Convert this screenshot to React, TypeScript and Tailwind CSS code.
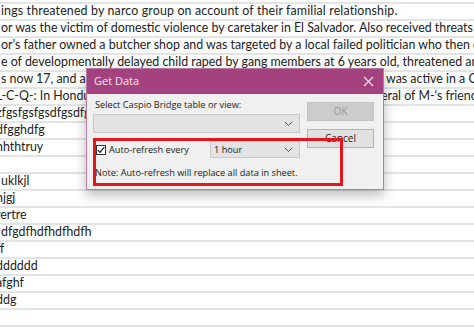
import React from "react";

type Row = { left: string; right?: string; cls: string };

const rows: Row[] = [
  { left: "", cls: "ml-[1px]" },
  { left: "ings threatened by narco group on account of their familial relationship.", cls: "ml-[1px] tracking-[0.15px]" },
  { left: "or was the victim of domestic violence by caretaker in El Salvador. Also received threats in", cls: "ml-[1px]" },
  { left: "or\u2019s father owned a butcher shop and was targeted by a local failed politician who then ca", cls: "ml-[1px]" },
  { left: "e of developmentally delayed child raped by gang members at 6 years old, threatened and", cls: "ml-[1px]" },
  { left: "s now 17, and a c", right: "was active in a Ch", cls: "ml-[1px]" },
  { left: "L-C-Q-: In Hondu", right: "eral of M-\u2018s frienc", cls: "-ml-[4px]" },
  { left: "zfgsfgsfgsdfgsdfg", cls: "-ml-[4px]" },
  { left: "dfgghdfg", cls: "-ml-[4px]" },
  { left: "nhthtruy", cls: "-ml-[4px]" },
  { left: "", cls: "ml-[1px]" },
  { left: "uklkjl", cls: "ml-[1px]" },
  { left: "hjgj", cls: "-ml-[4px]" },
  { left: "rertre", cls: "-ml-[4px]" },
  { left: "dfgdfhdfhdfhdfh", cls: "ml-[1px]" },
  { left: "ff", cls: "-ml-[4px]" },
  { left: "dddddd", cls: "-ml-[4px]" },
  { left: "afghf", cls: "-ml-[4px]" },
  { left: "ddg", cls: "-ml-[4px]" },
  { left: "", cls: "ml-[1px]" },
  { left: "", cls: "ml-[1px]" },
];

function Chevron() {
  return (
    <svg width="9" height="6" viewBox="0 0 9 6" className="shrink-0">
      <path d="M0.8 0.8 L4.5 4.5 L8.2 0.8" fill="none" stroke="#555" strokeWidth="1" />
    </svg>
  );
}

export default function App() {
  return (
    <div className="relative w-[474px] h-[328px] overflow-hidden bg-white">
      <div className="-mt-[13px] font-['Lato',sans-serif] text-[12.4px] text-[#222]">
        {rows.map((r, i) => (
          <div
            key={i}
            className="h-[17px] border-b-2 border-[#e4e4e4] flex items-center whitespace-nowrap overflow-hidden"
          >
            {r.right ? (
              <>
                <span className={`inline-block shrink-0 w-[385px] overflow-hidden ${r.cls}`}>{r.left}</span>
                <span>{r.right}</span>
              </>
            ) : (
              <span className={r.cls}>{r.left}</span>
            )}
          </div>
        ))}
      </div>

      {/* Dialog */}
      <div className="absolute left-[86px] top-[68px] w-[298px] h-[122px] border border-[#b77aa3] bg-[#f0f0f0] shadow-[0_5px_12px_rgba(0,0,0,0.28)] font-['Open_Sans',sans-serif] text-[9.2px] text-[#1a1a1a] whitespace-nowrap">
        <div className="h-[25px] bg-[#a4427f] flex items-center justify-between pl-[7px] pr-[9px]">
          <span className="text-[11px] text-[#f6e4ef]">Get Data</span>
          <svg width="11" height="11" viewBox="0 0 11 11">
            <path d="M1 1 L10 10 M10 1 L1 10" stroke="#f3dbe9" strokeWidth="1.3" />
          </svg>
        </div>
        <div className="flex px-[6px]">
          <div className="w-[207px] flex flex-col">
            <div className="mt-[4px] leading-[14px] pl-[2px]">Select Caspio Bridge table or view:</div>
            <div className="mt-[2px] h-[19px] bg-[#e3e3e3] border border-[#c9c9c9] flex items-center justify-end pr-[6px]">
              <Chevron />
            </div>
            <div className="mt-[8px] h-[17px] flex items-center">
              <div className="ml-[3px] w-[10px] h-[10px] border border-[#333] bg-white flex items-center justify-center">
                <svg width="8" height="8" viewBox="0 0 8 8">
                  <path d="M0.8 4.2 L3 6.4 L7.3 1.2" fill="none" stroke="#111" strokeWidth="1.1" />
                </svg>
              </div>
              <span className="ml-[3px]">Auto-refresh every</span>
              <div className="ml-auto w-[90px] h-[17px] bg-[#e3e3e3] border border-[#c9c9c9] flex items-center justify-between pl-[3px] pr-[6px]">
                <span>1 hour</span>
                <Chevron />
              </div>
            </div>
            <div className="mt-[8px] leading-[14px] pl-[2px]">Note: Auto-refresh will replace all data in sheet.</div>
          </div>
          <div className="ml-[7px] w-[67px] flex flex-col">
            <div className="mt-[8px] h-[19px] bg-[#cccccc] border border-[#c2c2c2] flex items-center justify-center text-[#9a9a9a] text-[10px]">
              OK
            </div>
            <div className="mt-[8px] h-[19px] bg-[#e1e1e1] border border-[#b4b4b4] flex items-center justify-center text-[10px]">
              Cancel
            </div>
          </div>
        </div>
        {/* Red annotation box */}
        <div className="absolute left-[6px] top-[69px] w-[250px] h-[48px] border-[3px] border-[#e3161d]" />
      </div>
    </div>
  );
}
